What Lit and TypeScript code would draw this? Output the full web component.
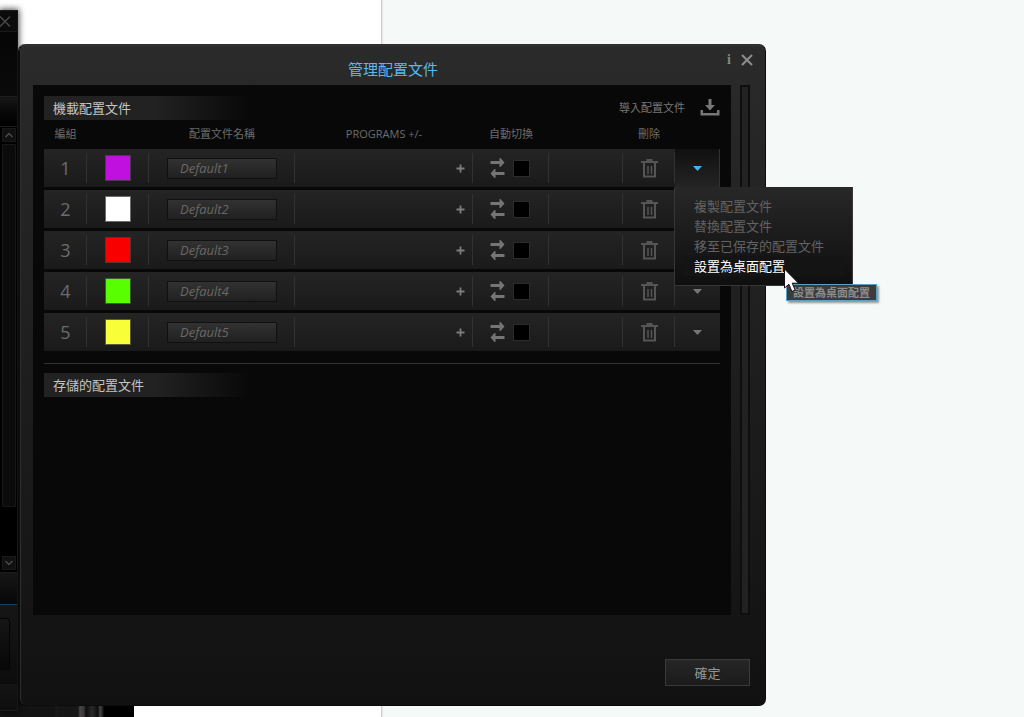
import { LitElement, html, css, svg } from "lit";
import { customElement, state } from "lit/decorators.js";
import { styleMap } from "lit/directives/style-map.js";
import { classMap } from "lit/directives/class-map.js";

interface Profile {
  id: number;
  color: string;
  edge: string;
  name: string;
}

const PROFILES: Profile[] = [
  { id: 1, color: "#c010e0", edge: "#4a3a50", name: "Default1" },
  { id: 2, color: "#ffffff", edge: "#6a6e6a", name: "Default2" },
  { id: 3, color: "#f80000", edge: "#5a3434", name: "Default3" },
  { id: 4, color: "#58ff00", edge: "#40583a", name: "Default4" },
  { id: 5, color: "#f8ff38", edge: "#5c5c3c", name: "Default5" },
];

const ACTIONS = ["複製配置文件", "替換配置文件", "移至已保存的配置文件", "設置為桌面配置"];

const crossIcon = svg`<path d="M1 1 11 11M11 1 1 11" fill="none" stroke="currentColor" stroke-width="2.2"/>`;

/** The application window that sits behind the dialog. */
@customElement("back-window")
export class BackWindow extends LitElement {
  static styles = css`
    :host {
      display: flex;
      flex-direction: column;
      box-sizing: border-box;
      background: #040404;
      border-top: 1px solid #1c1c1c;
      border-right: 1px solid #161616;
      box-shadow: 0 0 6px 1px rgba(0, 0, 0, 0.7);
      color: #4a4a4a;
      overflow: hidden;
    }
    svg { display: block; }
    .title {
      height: 20px;
      display: flex;
      align-items: center;
      border-bottom: 1px solid #1a1a1a;
      background: #0b0b0b;
    }
    .pane { height: 64px; background: linear-gradient(#060606, #0a0a0a); }
    .bar {
      height: 29px;
      border-top: 1px solid #1d1d1d;
      border-bottom: 1px solid #1a1a1a;
      background: linear-gradient(#161616, #060606 60%, #000);
    }
    .scroll {
      flex: 1;
      display: flex;
      flex-direction: column;
      gap: 2px;
      padding: 1px 1px 2px 2px;
      background: #000;
    }
    .arrow {
      height: 14px;
      display: grid;
      place-items: center;
      background: #101010;
      border: 1px solid #191919;
      box-sizing: border-box;
    }
    .thumb {
      flex: 0 1 363px;
      background: #0b0b0b;
      border: 1px solid #171717;
      border-radius: 1px;
      box-sizing: border-box;
    }
    .gap { flex: 1; }
    .status {
      height: 31px;
      border-top: 1px solid #1d1d1d;
      border-bottom: 1px solid #17425f;
      background: linear-gradient(#161616, #070707);
    }
    .dock {
      height: 79px;
      padding-top: 13px;
      box-sizing: border-box;
      background: linear-gradient(#161616, #0c0c0c);
    }
    .slot {
      width: 10px;
      height: 52px;
      box-sizing: border-box;
      border: 1px solid #030303;
      border-left: 0;
      border-bottom: 0;
      border-radius: 0 4px 0 0;
      background: linear-gradient(#161616, #070707);
    }
    .foot {
      height: 26px;
      border-bottom: 1px solid #1d1d1d;
      background: linear-gradient(#141414, #0e0e0e);
    }
  `;

  render() {
    return html`
      <div class="title">
        <svg width="12" height="12" viewBox="0 0 12 12">
          <path d="M0 1.500 10 11.500M10 1.500 0 11.500" fill="none" stroke="currentColor" stroke-width="1.400" />
        </svg>
      </div>
      <div class="pane"></div>
      <div class="bar"></div>
      <div class="scroll">
        <div class="arrow">
          <svg width="8" height="6" viewBox="0 0 8 6"><path d="M.5 5 4 1.500 7.500 5" fill="none" stroke="currentColor" stroke-width="1.500" /></svg>
        </div>
        <div class="thumb"></div>
        <div class="gap"></div>
        <div class="arrow">
          <svg width="8" height="6" viewBox="0 0 8 6"><path d="M.5 1 4 4.500 7.500 1" fill="none" stroke="currentColor" stroke-width="1.500" /></svg>
        </div>
      </div>
      <div class="status"></div>
      <div class="dock"><div class="slot"></div></div>
      <div class="foot"></div>
    `;
  }
}

@customElement("app-root")
export class AppRoot extends LitElement {
  @state() private openRow = 1;
  @state() private hovered = 3;

  static styles = css`
    :host {
      display: block;
      position: relative;
      min-height: 100vh;
      overflow: hidden;
      background: #f5f9f8;
      font-family: "Open Sans", "Noto Sans CJK TC", sans-serif;
      font-size: 13px;
      color: #6c6c6c;
    }
    * { box-sizing: border-box; }
    svg { display: block; }
    button {
      margin: 0;
      padding: 0;
      border: 0;
      background: none;
      color: inherit;
      font: inherit;
      cursor: default;
    }
    .sheet {
      position: absolute;
      inset: 0 auto 0 0;
      width: 382px;
      background: #fff;
      border-right: 1px solid #cfd1d1;
      box-shadow: 1px 0 1px #e6e9e9;
    }
    .behind {
      position: absolute;
      left: 0;
      top: 10px;
      bottom: 6px;
      width: 18px;
    }
    .strip {
      position: absolute;
      left: 0;
      bottom: 0;
      width: 134px;
      height: 40px;
      background: linear-gradient(90deg, #141313 55px, #1c1b1b 56px, #161515 58px, #171616 78px, #4a4646 80px, #383535 84px, #0c0c0c 86px, #2a2a2a 92px, #0c0c0c 98px, #4a4646 100px, #1a1a1a 103px, #000 104px);
    }
    .dialog {
      position: absolute;
      left: 19px;
      top: 44px;
      width: 747px;
      max-width: calc(100% - 19px);
      display: flex;
      flex-direction: column;
      padding: 0 12px 19px 13px;
      border: 1px solid #0c0c0c;
      border-top-color: #2c2c2c;
      border-radius: 7px;
      background: linear-gradient(#2b2b2b, #262626 15%, #1a1a1a 65%, #111);
      box-shadow: inset 2px 0 1px -1px #303030, inset 0 1px 0 #333, -1px 0 0 #0a0a0a;
    }
    .titlebar {
      height: 40px;
      display: grid;
      grid-template-columns: 1fr auto 1fr;
      align-items: start;
    }
    .title {
      grid-column: 2;
      margin: 0;
      padding-top: 14px;
      font-size: 15px;
      line-height: 20px;
      font-weight: 400;
      color: #5cb8ec;
    }
    .tools {
      justify-self: end;
      display: flex;
      align-items: center;
      gap: 10px;
      padding-top: 8px;
      color: #8a8a8a;
    }
    .info {
      font-family: "Liberation Serif", serif;
      font-size: 14px;
      line-height: 14px;
      font-weight: 700;
      color: #858585;
    }
    .body { display: flex; gap: 9px; padding-right: 3px; }
    .panel {
      flex: 1;
      min-width: 0;
      min-height: 530px;
      padding: 11px;
      background: #080808;
    }
    .track {
      width: 10px;
      border: 2px solid #0e0e0e;
      background: #222;
    }
    .head { display: flex; justify-content: space-between; }
    .section {
      width: 220px;
      margin: 0;
      padding-left: 9px;
      font-size: 13px;
      line-height: 24px;
      font-weight: 400;
      color: #c4c4c4;
      background: linear-gradient(90deg, #222 50%, #080808 94%);
    }
    .import {
      display: flex;
      align-items: center;
      gap: 15px;
      height: 22px;
      font-size: 11px;
      color: #777;
    }
    table {
      width: 100%;
      table-layout: fixed;
      border-collapse: separate;
      border-spacing: 0 3px;
    }
    th {
      height: 23px;
      padding: 0 0 2px;
      font-size: 11px;
      line-height: 16px;
      font-weight: 400;
      white-space: nowrap;
    }
    td {
      height: 38px;
      padding: 0;
      text-align: center;
      vertical-align: middle;
      background:
        linear-gradient(#323232, #323232) right center / 1px 30px no-repeat,
        linear-gradient(#242424, #1a1a1a);
    }
    td:last-child { background: linear-gradient(#242424, #1a1a1a); }
    .c1 { width: 43px; }
    .c2 { width: 62px; }
    .c3 { width: 146px; }
    .c5 { width: 76px; }
    .c6 { width: 74px; }
    .c7 { width: 52px; }
    .c8 { width: 45px; }
    .number { font-size: 18px; line-height: 24px; color: #6c6c6c; }
    .swatch {
      display: block;
      width: 26px;
      height: 26px;
      margin: 0 auto;
      border: 1px solid;
    }
    .name {
      display: block;
      width: 110px;
      height: 21px;
      margin: 0 auto;
      padding: 0 12px 1px;
      border: 1px solid #101010;
      border-radius: 0;
      outline: 0;
      background: linear-gradient(#323232, #202020);
      color: #686868;
      font: italic 13px "Open Sans", sans-serif;
    }
    .add { display: block; margin: 0 8px 0 auto; color: #7c7c7c; }
    .auto {
      display: flex;
      align-items: center;
      justify-content: center;
      gap: 8px;
      padding-right: 2px;
      color: #757575;
    }
    .check {
      appearance: none;
      width: 17px;
      height: 17px;
      margin: 0;
      border: 1px solid #2c2c2c;
      background: #000;
    }
    .delete { display: block; margin: 0 auto; color: #555; }
    .toggle { width: 100%; height: 38px; display: grid; place-items: center; color: #777; }
    td.more { position: relative; }
    td.open {
      background: linear-gradient(#101010, #242424);
      border-right: 1px solid #333;
    }
    .open .toggle { color: #3fb4f0; }
    .menu {
      position: absolute;
      z-index: 2;
      left: -1px;
      top: 38px;
      width: 179px;
      margin: 0;
      padding: 8px 8px 9px;
      list-style: none;
      border: 1px solid #363636;
      border-top-color: #262626;
      background: linear-gradient(#272727, #0f0f0f);
    }
    .item {
      display: block;
      width: 100%;
      height: 20px;
      padding-left: 11px;
      text-align: left;
      font-size: 13px;
      line-height: 19px;
      white-space: nowrap;
      color: #626262;
    }
    .item.hot { color: #fff; background: #141414; }
    .tip {
      position: absolute;
      z-index: 3;
      left: 111px;
      top: 135px;
      padding: 0 6px;
      border: 1px solid #5aa0c4;
      background: #3c3c3c;
      box-shadow: 2px 2px 2px rgba(0, 0, 0, 0.4);
      font-size: 11px;
      line-height: 15px;
      font-weight: 700;
      white-space: nowrap;
      color: #8c8c8c;
    }
    .cursor { position: absolute; z-index: 4; left: 108px; top: 119px; }
    .rule {
      height: 1px;
      margin: 9px 0;
      border: 0;
      background: #303030;
    }
    .confirm {
      align-self: flex-end;
      width: 85px;
      height: 27px;
      margin: 44px 3px 0 0;
      padding-bottom: 1px;
      border: 1px solid #3a3a3a;
      background: linear-gradient(#262626, #1b1b1b);
      font-size: 13px;
      color: #949494;
    }
  `;

  private toggle(id: number) {
    this.openRow = this.openRow === id ? 0 : id;
  }

  private renderMenu() {
    return html`
      <ul class="menu">
        ${ACTIONS.map(
          (label, i) => html`<li>
            <button
              class=${classMap({ item: true, hot: i === this.hovered })}
              @mouseenter=${() => (this.hovered = i)}
            >${label}</button>
          </li>`
        )}
      </ul>
      <div class="tip" role="tooltip">${ACTIONS[3]}</div>
      <svg class="cursor" width="17" height="25" viewBox="0 0 17 25">
        <path d="M1.500 1V20L5.900 16.200 8.800 23.500 12.200 22 9.200 15.200H15.500Z" fill="#fff" stroke="#111" stroke-width="1" />
      </svg>
    `;
  }

  private renderRow(p: Profile) {
    const open = p.id === this.openRow;
    return html`
      <tr>
        <td class="number">${p.id}</td>
        <td>
          <button
            class="swatch"
            aria-label="Color ${p.id}"
            style=${styleMap({ backgroundColor: p.color, borderColor: p.edge })}
          ></button>
        </td>
        <td><input class="name" type="text" aria-label="配置文件名稱" .value=${p.name} /></td>
        <td>
          <button class="add" aria-label="Add program">
            <svg width="9" height="9" viewBox="0 0 9 9"><path d="M4.500 .5V8.500M.5 4.500H8.500" fill="none" stroke="currentColor" stroke-width="1.800" /></svg>
          </button>
        </td>
        <td>
          <label class="auto">
            <svg width="15" height="20" viewBox="0 0 15 20" fill="currentColor">
              <path d="M.5 3H9.500V0H10.500L14.500 4.500 10.500 9H9.500V6H.5Z" />
              <path d="M14.500 14H5.500V11H4.500L.5 15.500 4.500 20H5.500V17H14.500Z" />
            </svg>
            <input class="check" type="checkbox" aria-label="自動切換" />
          </label>
        </td>
        <td></td>
        <td>
          <button class="delete" aria-label="刪除">
            <svg width="17" height="19" viewBox="0 0 17 19" fill="none" stroke="currentColor" stroke-width="2">
              <path d="M0 3H17M5.500 1H11.500" />
              <path d="M3 4V17.500H14V4" />
              <path d="M7 7V15M10.500 7V15" stroke-width="1.500" />
            </svg>
          </button>
        </td>
        <td class=${classMap({ more: true, open })}>
          <button class="toggle" aria-label="More" aria-expanded=${open} @click=${() => this.toggle(p.id)}>
            <svg width="9" height="5" viewBox="0 0 9 5" fill="currentColor"><path d="M0 0H9L4.500 5Z" /></svg>
          </button>
          ${open ? this.renderMenu() : ""}
        </td>
      </tr>
    `;
  }

  render() {
    return html`
      <div class="sheet"></div>
      <div class="strip"></div>
      <back-window class="behind"></back-window>
      <main class="dialog">
        <header class="titlebar">
          <h1 class="title">管理配置文件</h1>
          <div class="tools">
            <button class="info">i</button>
            <button aria-label="Close"><svg width="12" height="12" viewBox="0 0 12 12">${crossIcon}</svg></button>
          </div>
        </header>
        <div class="body">
          <section class="panel">
            <div class="head">
              <h2 class="section">機載配置文件</h2>
              <button class="import">
                導入配置文件
                <svg width="20" height="18" viewBox="0 0 20 18" fill="currentColor">
                  <path d="M8.500 1H11.500V7H15L10 12.500 5 7H8.500Z" />
                  <path d="M.5 12H3V15H17V12H19.500V17.500H.5Z" />
                </svg>
              </button>
            </div>
            <table>
              <colgroup>
                <col class="c1" /><col class="c2" /><col class="c3" /><col />
                <col class="c5" /><col class="c6" /><col class="c7" /><col class="c8" />
              </colgroup>
              <thead>
                <tr>
                  <th>編組</th><th></th><th>配置文件名稱</th><th>PROGRAMS +/-</th>
                  <th>自動切換</th><th></th><th>刪除</th><th></th>
                </tr>
              </thead>
              <tbody>${PROFILES.map((p) => this.renderRow(p))}</tbody>
            </table>
            <hr class="rule" />
            <h2 class="section">存儲的配置文件</h2>
          </section>
          <div class="track"></div>
        </div>
        <button class="confirm">確定</button>
      </main>
    `;
  }
}
